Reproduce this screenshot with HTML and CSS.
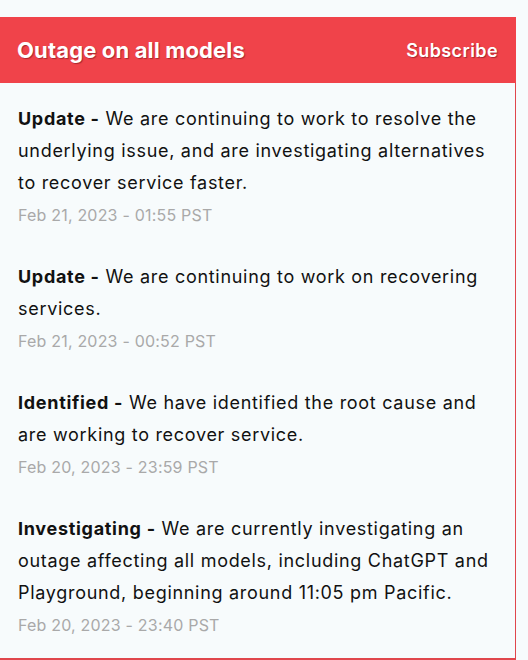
FILE: index.html
```html
<!DOCTYPE html>
<html>
<head>
<meta charset="utf-8">
<link rel="stylesheet" href="styles.css">
</head>
<body>
<div class="card">
  <div class="card-header">
    <span class="title">Outage on all models</span>
    <span class="subscribe">Subscribe</span>
  </div>
  <div class="card-body">
    <div class="update">
      <p class="text"><strong>Update -</strong> We are continuing to work to resolve the underlying issue, and are investigating alternatives to recover service faster.</p>
      <p class="date">Feb 21, 2023 - 01:55 PST</p>
    </div>
    <div class="update">
      <p class="text"><strong>Update -</strong> We are continuing to work on recovering services.</p>
      <p class="date">Feb 21, 2023 - 00:52 PST</p>
    </div>
    <div class="update">
      <p class="text"><strong>Identified -</strong> We have identified the root cause and are working to recover service.</p>
      <p class="date">Feb 20, 2023 - 23:59 PST</p>
    </div>
    <div class="update">
      <p class="text"><strong>Investigating -</strong> We are currently investigating an outage affecting all models, including ChatGPT and Playground, beginning around 11:05 pm Pacific.</p>
      <p class="date">Feb 20, 2023 - 23:40 PST</p>
    </div>
  </div>
</div>
</body>
</html>
```

FILE: styles.css
```css
html, body {
  margin: 0;
  padding: 0;
  background: #f7fbfc;
}
body {
  padding-top: 17px;
  font-family: Inter, "Open Sans", sans-serif;
}
.card {
  width: 516px;
  box-sizing: border-box;
  border-right: 1px solid #e0464c;
  border-bottom: 2px solid #e0464c;
}
.card-header {
  background: #f0434a;
  height: 66px;
  display: flex;
  align-items: center;
  justify-content: space-between;
  padding: 0 18px 0 17px;
  margin-right: -1px;
  color: #fff;
  text-shadow: 1px 1px 1px rgba(120, 20, 30, 0.6);
}
.title {
  font-size: 22px;
  font-weight: 700;
  letter-spacing: 0.15px;
}
.subscribe {
  font-size: 18px;
  font-weight: 600;
  letter-spacing: 0.4px;
}
.card-body {
  padding: 20px 18px 17px 18px;
}
.update {
  margin-bottom: 30px;
}
.update:last-child {
  margin-bottom: 0;
}
.text {
  margin: 0;
  font-size: 18px;
  line-height: 32px;
  letter-spacing: 0.7px;
  color: #111;
}
.text strong {
  font-weight: 700;
}
.date {
  margin: 0;
  font-size: 16px;
  line-height: 32px;
  letter-spacing: 0.2px;
  color: #a9a9a9;
}
```
